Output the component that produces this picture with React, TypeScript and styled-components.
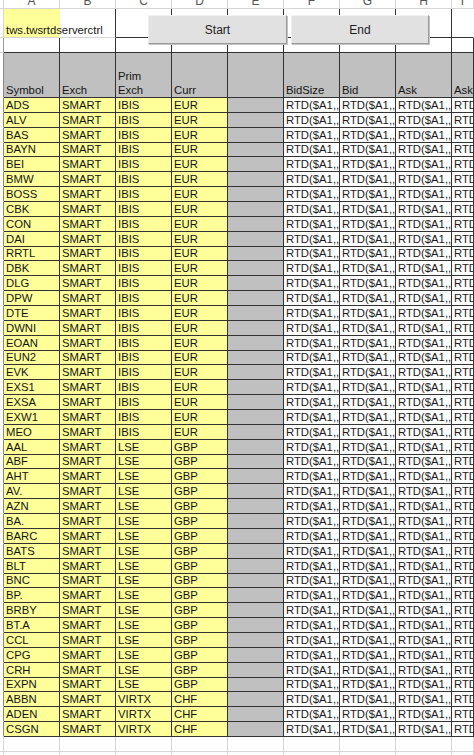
import React from 'react';
import styled, { createGlobalStyle } from 'styled-components';

const Global = createGlobalStyle`
  html, body { margin: 0; padding: 0; background: #ffffff; }
  body {
    width: 474px;
    height: 755px;
    overflow: hidden;
    font-family: "Liberation Sans", Arial, sans-serif;
  }
`;

const DARK = '#333333';
const LIGHT = '#d6d6d6';
const YELLOW = '#ffff99';
const GRAY = '#c0c0c0';
const COLS = '4px repeat(8, 56px) 22px';

const Sheet = styled.div`
  position: relative;
  width: 474px;
  height: 755px;
  overflow: hidden;
  background: #ffffff;
`;

const Row = styled.div<{ $h: number }>`
  display: grid;
  grid-template-columns: ${COLS};
  height: ${(p) => p.$h}px;
`;

const Cell = styled.div<{
  $bg?: string;
  $r?: string;
  $b?: string;
  $open?: boolean;
}>`
  box-sizing: border-box;
  min-width: 0;
  background: ${(p) => p.$bg ?? 'transparent'};
  border-right: 1px solid ${(p) => p.$r ?? LIGHT};
  border-bottom: 1px solid ${(p) => p.$b ?? LIGHT};
  overflow: ${(p) => (p.$open ? 'visible' : 'hidden')};
  white-space: nowrap;
  display: flex;
  align-items: flex-end;
  padding: 0 0 0 2px;
  font-size: 11.3px;
  line-height: 13px;
  color: #151515;
`;

const Letter = styled.div`
  box-sizing: border-box;
  border-right: 1px solid ${LIGHT};
  border-bottom: 1px solid ${LIGHT};
  overflow: hidden;
  display: flex;
  align-items: flex-end;
  justify-content: center;
  font-size: 12px;
  line-height: 13px;
  color: #555555;
`;

const HeadText = styled.span`
  white-space: pre-line;
  line-height: 13.3px;
`;

const Formula = styled.span`
  color: #1d1822;
`;

const Button = styled.button<{ $left: number; $w: number }>`
  position: absolute;
  top: 15px;
  left: ${(p) => p.$left}px;
  width: ${(p) => p.$w}px;
  height: 29px;
  box-sizing: border-box;
  margin: 0;
  padding: 0;
  background: #e1e1e1;
  border: 1px solid;
  border-color: #f2f2f2 #9a9a9a #9a9a9a #ededed;
  box-shadow: 1px 1px 0 #c4c4c4;
  font-family: "Liberation Sans", Arial, sans-serif;
  font-size: 12px;
  color: #1e1e1e;
  display: flex;
  align-items: center;
  justify-content: center;
`;

const LETTERS = ['A', 'B', 'C', 'D', 'E', 'F', 'G', 'H', 'I'];

const eur = ['ADS', 'ALV', 'BAS', 'BAYN', 'BEI', 'BMW', 'BOSS', 'CBK', 'CON', 'DAI', 'RRTL', 'DBK', 'DLG', 'DPW', 'DTE', 'DWNI', 'EOAN', 'EUN2', 'EVK', 'EXS1', 'EXSA', 'EXW1', 'MEO'];
const gbp = ['AAL', 'ABF', 'AHT', 'AV.', 'AZN', 'BA.', 'BARC', 'BATS', 'BLT', 'BNC', 'BP.', 'BRBY', 'BT.A', 'CCL', 'CPG', 'CRH', 'EXPN'];
const chf = ['ABBN', 'ADEN', 'CSGN'];

const rows = [
  ...eur.map((s) => ({ sym: s, prim: 'IBIS', curr: 'EUR' })),
  ...gbp.map((s) => ({ sym: s, prim: 'LSE', curr: 'GBP' })),
  ...chf.map((s) => ({ sym: s, prim: 'VIRTX', curr: 'CHF' })),
];

const headers = ['Symbol', 'Exch', 'Prim\nExch', 'Curr', '', 'BidSize', 'Bid', 'Ask', 'AskSize'];

const ROW_H = 14.86;

export default function App() {
  return (
    <Sheet>
      <Global />
      <Row $h={9}>
        <Letter />
        {LETTERS.map((l) => (
          <Letter key={l}>{l}</Letter>
        ))}
      </Row>

      <Row $h={29}>
        <Cell />
        <Cell $bg={YELLOW} $r={YELLOW} $open>
          tws.twsrtdserverctrl
        </Cell>
        <Cell $r={DARK} />
        {[2, 3, 4, 5, 6, 7].map((i) => (
          <Cell key={i} $r={DARK} $b={DARK} />
        ))}
        <Cell $r="transparent" $b={DARK} />
      </Row>

      <Row $h={15}>
        <Cell $r="#9a9a9a" />
        {LETTERS.map((l) => (
          <Cell key={l} $bg="#ffffff" $r={DARK} $b={DARK} />
        ))}
      </Row>

      <Row $h={45}>
        <Cell $r="#8a8a8a" $b="transparent" />
        {headers.map((h, i) => (
          <Cell key={i} $bg={GRAY} $r={DARK} $b={DARK}>
            <HeadText>{h}</HeadText>
          </Cell>
        ))}
      </Row>

      {rows.map((r) => (
        <Row key={r.sym} $h={ROW_H}>
          <Cell $r="#8a8a8a" $b="transparent" />
          <Cell $bg={YELLOW} $r={DARK} $b={DARK}>{r.sym}</Cell>
          <Cell $bg={YELLOW} $r={DARK} $b={DARK}>SMART</Cell>
          <Cell $bg={YELLOW} $r={DARK} $b={DARK}>{r.prim}</Cell>
          <Cell $bg={YELLOW} $r={DARK} $b={DARK}>{r.curr}</Cell>
          <Cell $bg={GRAY} $r={DARK} $b={DARK} />
          {[0, 1, 2, 3].map((i) => (
            <Cell key={i} $bg="#ffffff" $r={DARK} $b={DARK}>
              <Formula>RTD($A1,,</Formula>
            </Cell>
          ))}
        </Row>
      ))}

      {[0, 1].map((k) => (
        <Row key={k} $h={15}>
          <Cell />
          {LETTERS.map((l) => (
            <Cell key={l} />
          ))}
        </Row>
      ))}

      <Button $left={148} $w={139}>Start</Button>
      <Button $left={291} $w={138}>End</Button>
    </Sheet>
  );
}
